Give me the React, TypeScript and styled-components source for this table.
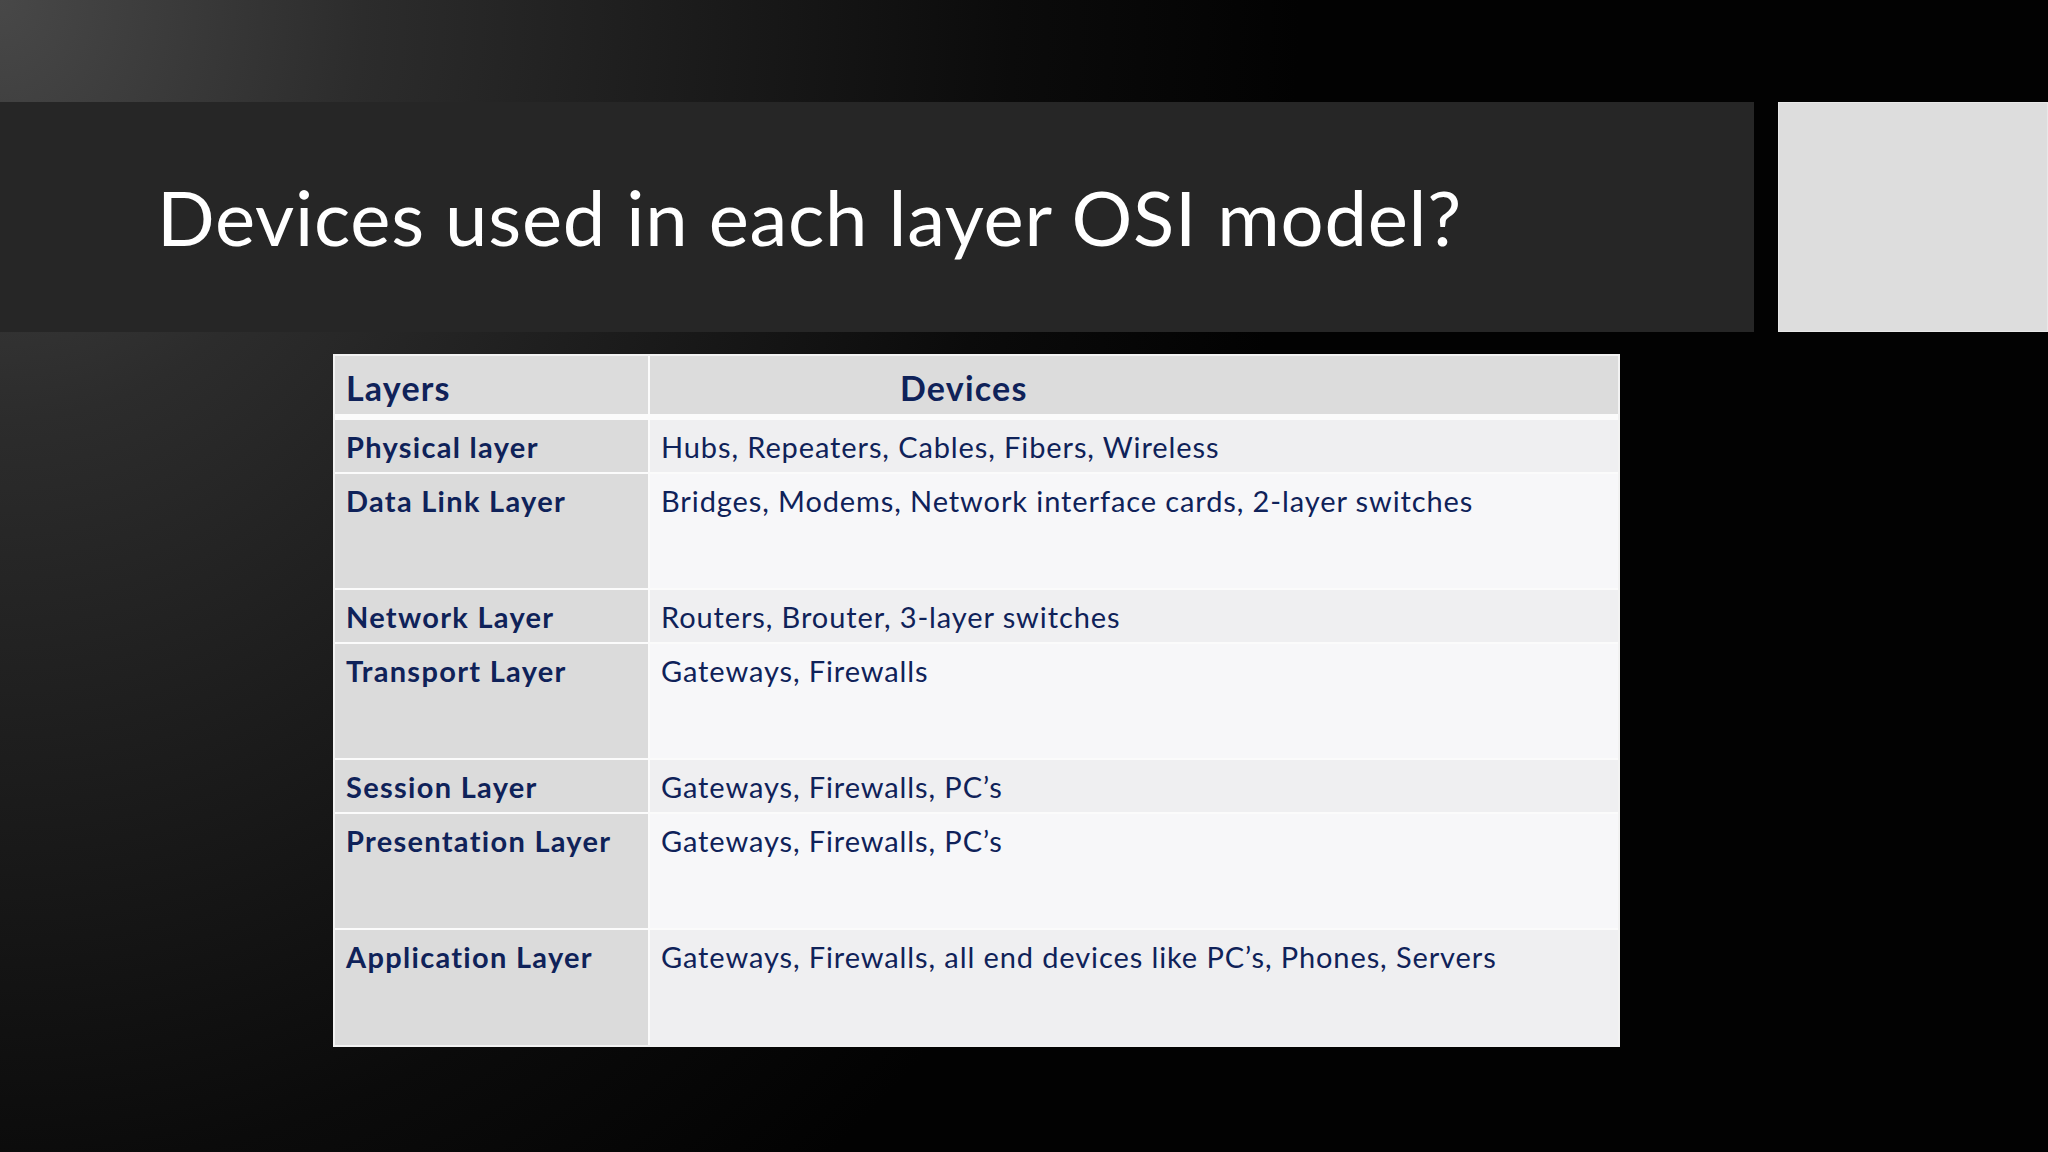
import React from "react";
import styled, { createGlobalStyle } from "styled-components";

const GlobalStyle = createGlobalStyle`
  html, body {
    margin: 0;
    padding: 0;
    background: #000;
  }
  * { box-sizing: border-box; }
`;

const Slide = styled.div`
  width: 2048px;
  height: 1152px;
  overflow: hidden;
  display: flex;
  flex-direction: column;
  padding-top: 102px;
  background: radial-gradient(
    ellipse 1300px 1500px at 0 0,
    #484848 0%,
    #2c2c2c 28%,
    #1c1c1c 52%,
    #0b0b0b 78%,
    #020202 100%
  );
  font-family: Lato, "Open Sans", sans-serif;
`;

const TitleRow = styled.div`
  display: flex;
  gap: 24px;
  height: 230px;
`;

const TitleBar = styled.div`
  width: 1754px;
  background: #262626;
  padding: 69px 0 0 157px;
`;

const Title = styled.h1`
  margin: 0;
  font-family: Lato, "Open Sans", sans-serif;
  font-weight: 400;
  font-size: 76px;
  line-height: 1.2;
  letter-spacing: 0.75px;
  color: #ffffff;
  white-space: nowrap;
`;

const Accent = styled.div`
  flex: 1;
  background: #dddddd;
  border: 1px solid #e8e8e8;
`;

const TableWrap = styled.div`
  margin: 22px 0 0 333px;
  width: 1287px;
  background: #fbfbfb;
  border: 2px solid #f2f2f2;
  display: flex;
  flex-direction: column;
  gap: 2px;
`;

const Row = styled.div<{ $h: number; $header?: boolean }>`
  display: grid;
  grid-template-columns: 313px 1fr;
  column-gap: 2px;
  height: ${(p) => p.$h}px;
  margin-bottom: ${(p) => (p.$header ? 4 : 0)}px;
`;

const HeadCell = styled.div<{ $indent?: number }>`
  background: #dcdcdc;
  color: #0f2259;
  font-weight: 700;
  font-size: 34px;
  line-height: 1.2;
  letter-spacing: 1.2px;
  padding: 12px 0 0 ${(p) => p.$indent ?? 11}px;
  white-space: nowrap;
`;

const LabelCell = styled.div`
  background: #dbdbdb;
  color: #0f2259;
  font-weight: 700;
  font-size: 29px;
  line-height: 1.2;
  letter-spacing: 1.3px;
  padding: 10px 0 0 11px;
  white-space: nowrap;
`;

const DataCell = styled.div<{ $alt: boolean }>`
  background: ${(p) => (p.$alt ? "#f7f7f9" : "#efeff1")};
  color: #0f2259;
  font-weight: 400;
  font-size: 29px;
  line-height: 1.2;
  letter-spacing: 0.9px;
  padding: 10px 0 0 11px;
  white-space: nowrap;
`;

const rows = [
  { layer: "Physical layer", devices: "Hubs, Repeaters, Cables, Fibers, Wireless", h: 52 },
  { layer: "Data Link Layer", devices: "Bridges, Modems, Network interface cards, 2-layer switches", h: 114 },
  { layer: "Network Layer", devices: "Routers, Brouter, 3-layer switches", h: 52 },
  { layer: "Transport Layer", devices: "Gateways, Firewalls", h: 114 },
  { layer: "Session Layer", devices: "Gateways, Firewalls, PC\u2019s", h: 52 },
  { layer: "Presentation Layer", devices: "Gateways, Firewalls, PC\u2019s", h: 114 },
  {
    layer: "Application Layer",
    devices: "Gateways, Firewalls, all end devices like PC\u2019s, Phones, Servers",
    h: 115,
  },
];

export default function App() {
  return (
    <>
      <GlobalStyle />
      <Slide>
        <TitleRow>
          <TitleBar>
            <Title>Devices used in each layer OSI model?</Title>
          </TitleBar>
          <Accent />
        </TitleRow>
        <TableWrap>
          <Row $h={58} $header>
            <HeadCell>Layers</HeadCell>
            <HeadCell $indent={250}>Devices</HeadCell>
          </Row>
          {rows.map((r, i) => (
            <Row key={r.layer} $h={r.h}>
              <LabelCell>{r.layer}</LabelCell>
              <DataCell $alt={i % 2 === 1}>{r.devices}</DataCell>
            </Row>
          ))}
        </TableWrap>
      </Slide>
    </>
  );
}
